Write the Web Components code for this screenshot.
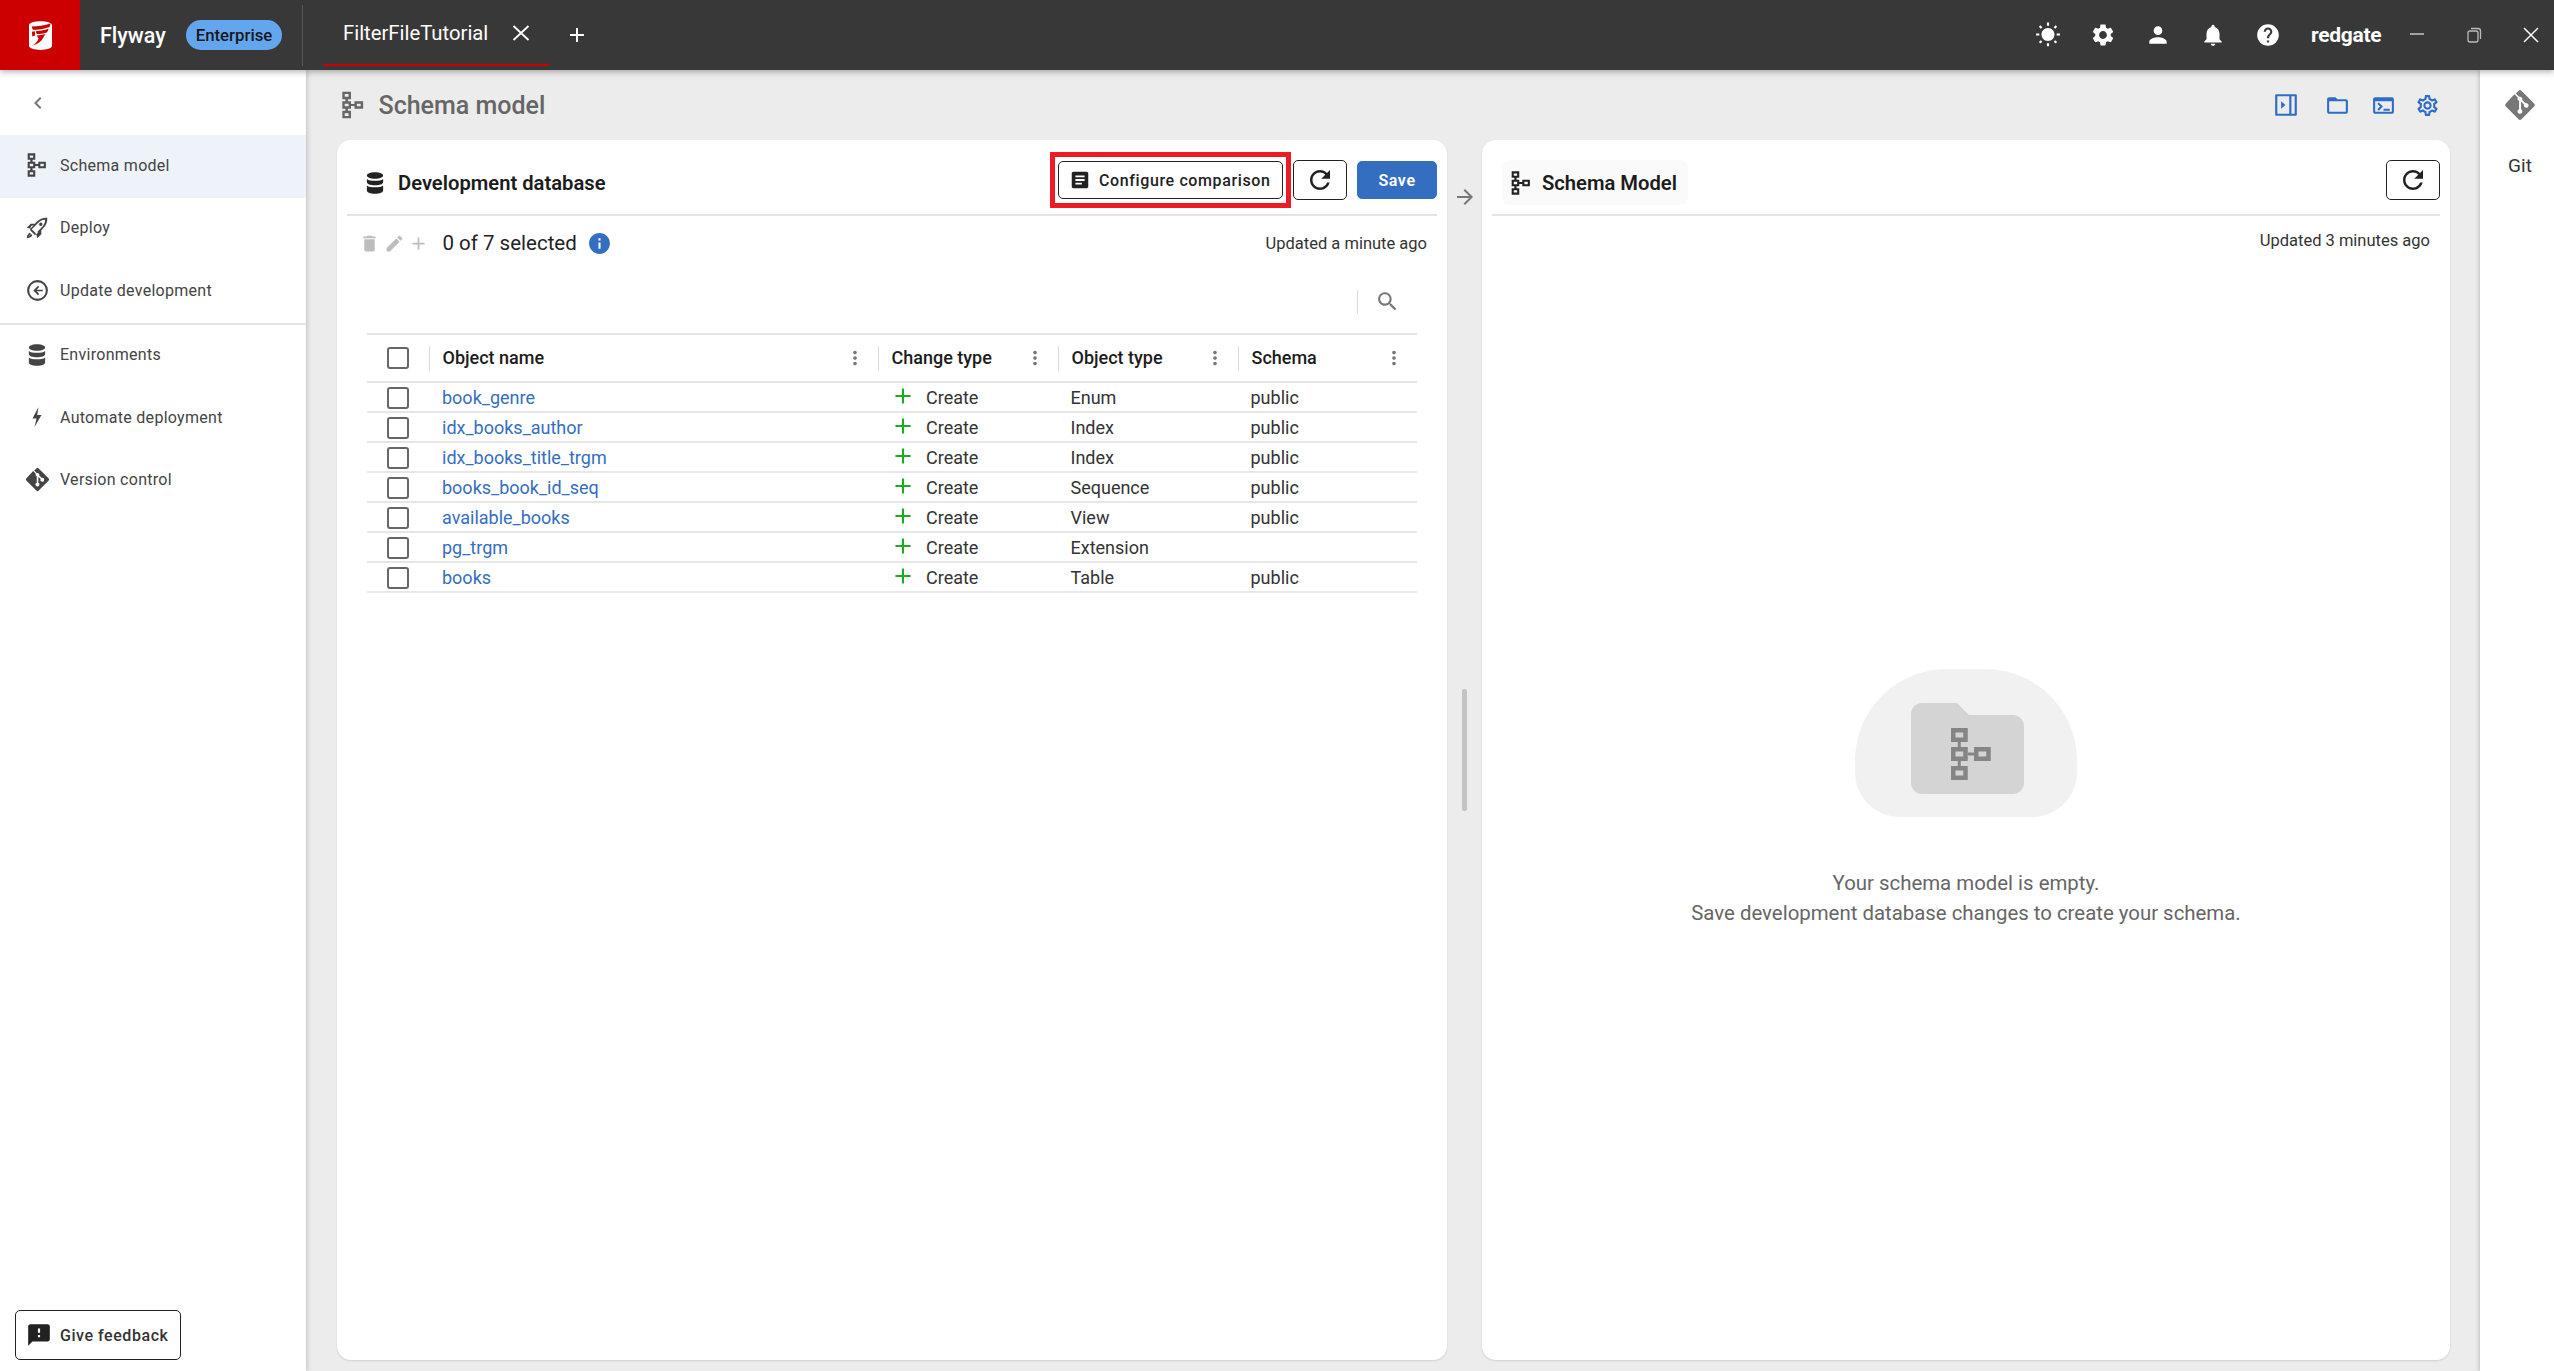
<!DOCTYPE html>
<html>
<head>
<meta charset="utf-8">
<title>Flyway Desktop</title>
<style>
   html, body { margin: 0; height: 100%; }
   body { font-family: Roboto, "Liberation Sans", sans-serif; overflow: hidden; }
</style>
</head>
<body>
<fw-app></fw-app>

<script>
   // Material style paths, 24x24 box
   const ICONS = {
      sun: 'M6.76 4.84l-1.8-1.79-1.41 1.41 1.79 1.79 1.42-1.41zM4 10.5H1v2h3v-2zm9-9.95h-2V3.5h2V.55zm7.45 3.91l-1.41-1.41-1.79 1.79 1.41 1.41 1.79-1.79zm-3.21 13.7l1.79 1.8 1.41-1.41-1.8-1.79-1.4 1.4zM20 10.5v2h3v-2h-3zm-8-5c-3.31 0-6 2.69-6 6s2.69 6 6 6 6-2.69 6-6-2.69-6-6-6zm-1 16.95h2V19.5h-2v2.95zm-7.45-3.91l1.41 1.41 1.79-1.8-1.41-1.41-1.79 1.8z',
      gear: 'M19.14 12.94c.04-.3.06-.61.06-.94 0-.32-.02-.64-.07-.94l2.03-1.58a.49.49 0 0 0 .12-.61l-1.92-3.32a.488.488 0 0 0-.59-.22l-2.39.96c-.5-.38-1.03-.7-1.62-.94l-.36-2.54a.484.484 0 0 0-.48-.41h-3.84c-.24 0-.43.17-.47.41l-.36 2.54c-.59.24-1.13.57-1.62.94l-2.39-.96c-.22-.08-.47 0-.59.22L2.74 8.87c-.12.21-.08.47.12.61l2.03 1.58c-.05.3-.09.63-.09.94s.02.64.07.94l-2.03 1.58a.49.49 0 0 0-.12.61l1.92 3.32c.12.22.37.29.59.22l2.39-.96c.5.38 1.03.7 1.62.94l.36 2.54c.05.24.24.41.48.41h3.84c.24 0 .44-.17.47-.41l.36-2.54c.59-.24 1.13-.56 1.62-.94l2.39.96c.22.08.47 0 .59-.22l1.92-3.32c.12-.22.07-.47-.12-.61l-2.01-1.58zM12 15.6c-1.98 0-3.6-1.62-3.6-3.6s1.62-3.6 3.6-3.6 3.6 1.62 3.6 3.6-1.62 3.6-3.6 3.6z',
      gearline: 'M19.43 12.98c.04-.32.07-.64.07-.98 0-.34-.03-.66-.07-.98l2.11-1.65c.19-.15.24-.42.12-.64l-2-3.46c-.09-.16-.26-.25-.44-.25-.06 0-.12.01-.17.03l-2.49 1c-.52-.4-1.08-.73-1.69-.98l-.38-2.65C14.46 2.18 14.25 2 14 2h-4c-.25 0-.46.18-.49.42l-.38 2.65c-.61.25-1.17.59-1.69.98l-2.49-1c-.06-.02-.12-.03-.18-.03-.17 0-.34.09-.43.25l-2 3.46c-.13.22-.07.49.12.64l2.11 1.65c-.04.32-.07.65-.07.98 0 .33.03.66.07.98l-2.11 1.65c-.19.15-.24.42-.12.64l2 3.46c.09.16.26.25.44.25.06 0 .12-.01.17-.03l2.49-1c.52.4 1.08.73 1.69.98l.38 2.65c.03.24.24.42.49.42h4c.25 0 .46-.18.49-.42l.38-2.65c.61-.25 1.17-.59 1.69-.98l2.49 1c.06.02.12.03.18.03.17 0 .34-.09.43-.25l2-3.46c.12-.22.07-.49-.12-.64l-2.11-1.65zm-1.98-1.71c.04.31.05.52.05.73 0 .21-.02.43-.05.73l-.14 1.13.89.7 1.08.84-.7 1.21-1.27-.51-1.04-.42-.9.68c-.43.32-.84.56-1.25.73l-1.06.43-.16 1.13-.2 1.35h-1.4l-.19-1.35-.16-1.13-1.06-.43c-.43-.18-.83-.41-1.23-.71l-.91-.7-1.06.43-1.27.51-.7-1.21 1.08-.84.89-.7-.14-1.13c-.03-.31-.05-.54-.05-.74s.02-.43.05-.73l.14-1.13-.89-.7-1.08-.84.7-1.21 1.27.51 1.04.42.9-.68c.43-.32.84-.56 1.25-.73l1.06-.43.16-1.13.2-1.35h1.39l.19 1.35.16 1.13 1.06.43c.43.18.83.41 1.23.71l.91.7 1.06-.43 1.27-.51.7 1.21-1.07.85-.89.7.14 1.13zM12 8c-2.21 0-4 1.79-4 4s1.79 4 4 4 4-1.79 4-4-1.79-4-4-4zm0 6c-1.1 0-2-.9-2-2s.9-2 2-2 2 .9 2 2-.9 2-2 2z',
      person: 'M12 12c2.21 0 4-1.79 4-4s-1.79-4-4-4-4 1.79-4 4 1.79 4 4 4zm0 2c-2.67 0-8 1.34-8 4v2h16v-2c0-2.66-5.33-4-8-4z',
      bell: 'M12 22c1.1 0 2-.9 2-2h-4c0 1.1.89 2 2 2zm6-6v-5c0-3.07-1.64-5.64-4.5-6.32V4c0-.83-.67-1.5-1.5-1.5s-1.5.67-1.5 1.5v.68C7.63 5.36 6 7.92 6 11v5l-2 2v1h16v-1l-2-2z',
      help: 'M12 2C6.48 2 2 6.48 2 12s4.48 10 10 10 10-4.48 10-10S17.52 2 12 2zm1 17h-2v-2h2v2zm2.07-7.75l-.9.92C13.45 12.9 13 13.5 13 15h-2v-.5c0-1.1.45-2.1 1.17-2.83l1.24-1.26c.37-.36.59-.86.59-1.41 0-1.1-.9-2-2-2s-2 .9-2 2H8c0-2.21 1.79-4 4-4s4 1.79 4 4c0 .88-.36 1.68-.93 2.25z',
      refresh: 'M17.65 6.35C16.2 4.9 14.21 4 12 4c-4.42 0-7.99 3.58-7.99 8s3.57 8 7.99 8c3.73 0 6.84-2.55 7.73-6h-2.08c-.82 2.33-3.04 4-5.65 4-3.31 0-6-2.69-6-6s2.69-6 6-6c1.66 0 3.14.69 4.22 1.78L13 11h7V4l-2.35 2.35z',
      search: 'M15.5 14h-.79l-.28-.27C15.41 12.59 16 11.11 16 9.5 16 5.91 13.09 3 9.5 3S3 5.91 3 9.5 5.91 16 9.5 16c1.61 0 3.09-.59 4.23-1.57l.27.28v.79l5 4.99L20.49 19l-4.99-5zm-6 0C7.01 14 5 11.99 5 9.5S7.01 5 9.5 5 14 7.01 14 9.5 11.99 14 9.5 14z',
      trash: 'M6 19c0 1.1.9 2 2 2h8c1.1 0 2-.9 2-2V7H6v12zM19 4h-3.5l-1-1h-5l-1 1H5v2h14V4z',
      edit: 'M3 17.25V21h3.75L17.81 9.94l-3.75-3.75L3 17.25zM20.71 7.04a.996.996 0 0 0 0-1.41l-2.34-2.34a.996.996 0 0 0-1.41 0l-1.83 1.83 3.75 3.75 1.83-1.83z',
      add: 'M19 13h-6v6h-2v-6H5v-2h6V5h2v6h6v2z',
      info: 'M12 2C6.48 2 2 6.48 2 12s4.48 10 10 10 10-4.48 10-10S17.52 2 12 2zm1 15h-2v-6h2v6zm0-8h-2V7h2v2z',
      kebab: 'M12 8c1.1 0 2-.9 2-2s-.9-2-2-2-2 .9-2 2 .9 2 2 2zm0 2c-1.1 0-2 .9-2 2s.9 2 2 2 2-.9 2-2-.9-2-2-2zm0 6c-1.1 0-2 .9-2 2s.9 2 2 2 2-.9 2-2-.9-2-2-2z',
      feedback: 'M20 2H4c-1.1 0-1.99.9-1.99 2L2 22l4-4h14c1.1 0 2-.9 2-2V4c0-1.1-.9-2-2-2zm-7 12h-2v-2h2v2zm0-4h-2V6h2v4z',
      article: 'M19 3H5c-1.1 0-2 .9-2 2v14c0 1.1.9 2 2 2h14c1.1 0 2-.9 2-2V5c0-1.1-.9-2-2-2zm-5 14H7v-2h7v2zm3-4H7v-2h10v2zm0-4H7V7h10v2z',
      arrow: 'M12 4l-1.41 1.41L16.17 11H4v2h12.17l-5.58 5.59L12 20l8-8z',
      back: 'M15.41 7.41L14 6l-6 6 6 6 1.41-1.41L10.83 12z',
      folder: 'M20 6h-8l-2-2H4c-1.1 0-1.99.9-1.99 2L2 18c0 1.1.9 2 2 2h16c1.1 0 2-.9 2-2V8c0-1.1-.9-2-2-2zm0 12H4V8h16v10z',
      terminal: 'M20 4H4c-1.11 0-2 .9-2 2v12c0 1.1.89 2 2 2h16c1.1 0 2-.9 2-2V6c0-1.1-.9-2-2-2zm0 14H4V8h16v10zm-2-1h-6v-2h6v2zM7.5 17l-1.41-1.41L8.67 13l-2.59-2.59L7.5 9l4 4-4 4z',
      panel: 'M3 2h18a1 1 0 0 1 1 1v18a1 1 0 0 1-1 1H3a1 1 0 0 1-1-1V3a1 1 0 0 1 1-1zm1 2v16h11V4H4zm13 0v16h3V4h-3zM7.500 8.500l4 3.500-4 3.500v-7z',
      schema: 'M4 2h6.500v5.600H4zM5.800 3.800v2h2.900v-2zM4 9.200h6.500v5.600H4zM5.800 11v2h2.900v-2zM4 16.400h6.500V22H4zM5.800 18.200v2h2.900v-2zM6.300 7.600h1.900v1.600H6.300zM6.300 14.800h1.900v1.600H6.300zM10.500 11.200h2.600v1.600h-2.600zM13.100 9.200h6.500v5.600h-6.500zM14.900 11v2h2.900v-2z',
      dbstack: 'M12 2c4.400 0 7.500 1.300 7.500 3S16.400 8 12 8 4.500 6.700 4.500 5 7.600 2 12 2zM4.500 8.200C6 9.500 8.800 10 12 10s6-.5 7.500-1.800V11c0 1.800-3.100 3.100-7.500 3.100S4.500 12.800 4.500 11V8.200zM4.500 14.200C6 15.500 8.800 16 12 16s6-.5 7.500-1.800V19c0 1.800-3.100 3-7.500 3s-7.500-1.200-7.500-3v-4.800z',
      rocket: 'M21.500 2.500c-3.800-.2-7 .9-9.600 3.500L10 8H6.200L2.500 11.700l3.900 1.100-1 1 4.800 4.800 1-1 1.100 3.900 3.700-3.700V14l1.900-1.900c2.600-2.600 3.800-5.800 3.600-9.600zM7.300 9.800h1.400l-1.900 2-1.200-.3 1.700-1.700zM16.900 10.800l-6 6-3.700-3.700 6-6c1.700-1.700 3.900-2.600 6.300-2.700-.1 2.400-1 4.700-2.600 6.400zM12.700 15.100v1.300l-1.700 1.700-.3-1.100 2-1.900zM15.500 10.100a1.600 1.600 0 1 0 0-3.200 1.600 1.600 0 0 0 0 3.200zM5.400 16.400c-1.300.4-2.300 1.500-2.900 5.100 3.600-.6 4.700-1.600 5.100-2.900l-1.200-1.200c-.3.900-.7 1.500-1.800 1.900.4-1.100 1-1.500 1.900-1.800l-1.100-1.100z',
      update: 'M12 2a10 10 0 1 0 0 20 10 10 0 0 0 0-20zm0 18a8 8 0 1 1 0-16 8 8 0 0 1 0 16zM12.500 7.500l1.100 1.100-2.400 2.600H17v1.600h-5.800l2.400 2.600-1.100 1.100L8 12l4.500-4.500z',
      bolt: 'M13.500 2L7.500 13.500h4L9.500 22l7-12h-4.300l1.300-8z',
      git: 'M22.600 10.900 13.100 1.400a1.500 1.500 0 0 0-2.200 0L8.900 3.400l2.500 2.500a1.800 1.800 0 0 1 2.300 2.300l2.400 2.400a1.800 1.800 0 1 1-1.100 1l-2.200-2.200v5.800a1.800 1.800 0 1 1-1.500-.1V8.800a1.800 1.800 0 0 1-1-2.400L7.800 3.900 1.400 10.900a1.500 1.500 0 0 0 0 2.200l9.500 9.500a1.500 1.500 0 0 0 2.200 0l9.500-9.500a1.500 1.500 0 0 0 0-2.200z'
   }

   class FwIcon extends HTMLElement {
      connectedCallback() {
         const size = this.getAttribute('size') || 24
         const color = this.getAttribute('color') || 'currentColor'
         const shadow = this.attachShadow({ mode: 'open' })
         const name = this.getAttribute('name')
         // the hand drawn schema squares need their holes cut
         const rule = name === 'schema' ? 'evenodd' : 'nonzero'
         shadow.innerHTML = `
            <style>
               :host { display: inline-flex; flex: none; width: ${size}px; height: ${size}px; }
               svg { display: block; width: 100%; height: 100%; }
            </style>
            <svg viewBox="0 0 24 24"><path fill="${color}" fill-rule="${rule}" d="${ICONS[name]}"/></svg>`
      }
   }
   customElements.define('fw-icon', FwIcon)

   class FwTitlebar extends HTMLElement {
      constructor() {
         super()
         this.attachShadow({ mode: 'open' }).innerHTML = `
            <style>
               :host { display: flex; align-items: stretch; height: 70px; background: #383838; color: #fff; position: relative; z-index: 5;
                  box-shadow: 0 2px 6px rgba(0,0,0,.3); }
               .logo { width: 80px; background: #cc0000; display: flex; align-items: center; justify-content: center; }
               .brand { display: flex; align-items: center; width: 222px; padding-left: 20px; box-sizing: border-box; font-size: 21.500px; font-weight: 500; }
               .fly { width: 66px; }
               .pill { margin-left: 20px; width: 96px; height: 30px; border-radius: 15px; background: #64a6ee; color: #14181f; display: flex; align-items: center;
                  justify-content: center; font-size: 16.800px; font-weight: 500; }
               .divider { width: 1px; margin: 5px 0 4px; background: #555; }
               .tab { margin-left: 20px; width: 226px; box-sizing: border-box; height: 66px; border-bottom: 2px solid #cc0000; padding-left: 20px; padding-top: 2px; display: flex; align-items: center; font-size: 20.300px; }
               .tab span { width: 168px; }
               .add { margin-left: 16px; align-self: center; }
               .right { margin-left: auto; display: flex; align-items: center; }
               .tools { display: flex; gap: 29px; margin-right: 30px; }
               .rg { font-size: 21px; font-weight: 700; letter-spacing: -.3px; width: 72px; }
               .win { display: flex; align-items: center; margin-left: 24px; margin-right: 13px; gap: 37px; }
               .win svg { display: block; width: 20px; height: 20px; }
            </style>
            <div class="logo">
               <svg width="23" height="29" viewBox="0 0 24 30">
                  <path fill="#fff" d="M0 4C0 1.500 6 0 12 0s12 1.500 12 4v22c0 2.500-6 4-12 4S0 28.500 0 26z"/>
                  <path fill="#cc0000" d="M2.700 5.500C9 5.500 16 4.500 22.600 2.500L21.500 6C16 8 9 9 4 9zM3 11l3-.5.500 4.500-3 1zM7 10.500C11 10.500 16 9.500 20.500 8L19 11.500C15 13 11 13.500 8 13.500zM8 15C11 15 14 14.500 17 13.500L15 17C13 21 9 24 3.500 25.500 7 23 9.500 20.500 10 18z"/>
               </svg>
            </div>
            <div class="brand"><span class="fly">Flyway</span><span class="pill">Enterprise</span></div>
            <div class="divider"></div>
            <div class="tab"><span>FilterFileTutorial</span>
               <svg width="20" height="20" viewBox="0 0 20 20"><path d="M2.500 3l15 14M17.500 3l-15 14" stroke="#fff" stroke-width="1.800"/></svg>
            </div>
            <fw-icon class="add" name="add" size="24"></fw-icon>
            <div class="right">
               <div class="tools">
                  <fw-icon name="sun" size="26"></fw-icon>
                  <fw-icon name="gear" size="26"></fw-icon>
                  <fw-icon name="person" size="26"></fw-icon>
                  <fw-icon name="bell" size="26"></fw-icon>
                  <fw-icon name="help" size="26"></fw-icon>
               </div>
               <span class="rg">redgate</span>
               <div class="win">
                  <svg viewBox="0 0 20 20"><path d="M3 9h14" stroke="#ddd" stroke-width="1.300"/></svg>
                  <svg viewBox="0 0 20 20" fill="none" stroke="#bbb" stroke-width="1.300"><rect x="4" y="6" width="10" height="11" rx="2"/><path d="M7 3.500h7a2.500 2.500 0 0 1 2.500 2.500v8"/></svg>
                  <svg viewBox="0 0 20 20"><path d="M3 3l14 14M17 3L3 17" stroke="#fff" stroke-width="1.500"/></svg>
               </div>
            </div>`
      }
   }
   customElements.define('fw-titlebar', FwTitlebar)

   class FwNavItem extends HTMLElement {
      constructor() {
         super()
         this.attachShadow({ mode: 'open' }).innerHTML = `
            <style>
               :host { display: flex; align-items: center; box-sizing: border-box; height: 62.500px; padding: 0 0 2px 22px; font-size: 16px; letter-spacing: .28px; color: #444; }
               :host([active]) { background: #eef3fa; }
               .ic { width: 30px; margin-right: 8px; display: flex; justify-content: center; }
            </style>
            <span class="ic"><slot name="icon"></slot></span><slot></slot>`
      }
   }
   customElements.define('fw-nav-item', FwNavItem)

   class FwSidebar extends HTMLElement {
      constructor() {
         super()
         this.attachShadow({ mode: 'open' }).innerHTML = `
            <style>
               :host { display: flex; flex-direction: column; flex: none; width: 306px; background: #fff; position: relative; z-index: 3;
                  box-shadow: 1px 0 5px rgba(0,0,0,.2); color: #777; }
               .back { height: 65px; padding-left: 26px; display: flex; align-items: center; }
               hr { border: 0; border-top: 2px solid #e4e4e4; margin: 0; }
               .foot { margin-top: auto; padding: 0 0 11px 15px; }
               .fb { box-sizing: border-box; width: 166px; height: 50px; border: 1.500px solid #222; border-radius: 5px; display: flex; align-items: center; padding-left: 10px; gap: 8px;
                  font-size: 16px; font-weight: 500; letter-spacing: .55px; color: #333; }
            </style>
            <div class="back"><fw-icon name="back" size="24"></fw-icon></div>
            <fw-nav-item active><fw-icon slot="icon" name="schema" size="28"></fw-icon>Schema model</fw-nav-item>
            <fw-nav-item><fw-icon slot="icon" name="rocket" size="26"></fw-icon>Deploy</fw-nav-item>
            <fw-nav-item><fw-icon slot="icon" name="update" size="25"></fw-icon>Update development</fw-nav-item>
            <hr>
            <fw-nav-item><fw-icon slot="icon" name="dbstack" size="26"></fw-icon>Environments</fw-nav-item>
            <fw-nav-item><fw-icon slot="icon" name="bolt" size="24"></fw-icon>Automate deployment</fw-nav-item>
            <fw-nav-item><fw-icon slot="icon" name="git" size="25"></fw-icon>Version control</fw-nav-item>
            <div class="foot"><div class="fb"><fw-icon name="feedback" size="26" color="#222"></fw-icon>Give feedback</div></div>`
      }
   }
   customElements.define('fw-sidebar', FwSidebar)

   class FwCard extends HTMLElement {
      constructor() {
         super()
         this.attachShadow({ mode: 'open' }).innerHTML = `
            <style>
               :host { display: flex; flex-direction: column; background: #fff; border-radius: 14px; min-width: 0; box-shadow: 0 1px 2px rgba(0,0,0,.12); }
               header { box-sizing: border-box; height: 76px; flex: none; margin: 0 10px; border-bottom: 2px solid #e4e4e4; display: flex; align-items: center; }
               .body { flex: 1; display: flex; flex-direction: column; min-height: 0; }
            </style>
            <header><slot name="head"></slot></header>
            <div class="body"><slot></slot></div>`
      }
   }
   customElements.define('fw-card', FwCard)

   class FwButton extends HTMLElement {
      constructor() {
         super()
         this.attachShadow({ mode: 'open' }).innerHTML = `
            <style>
               :host { display: inline-flex; align-items: center; justify-content: center; box-sizing: border-box; height: 38px; border: 1.500px solid #222; border-radius: 5px;
                  background: #fff; color: #222; font-size: 16px; font-weight: 500; letter-spacing: .62px; gap: 8px; }
               :host([icon]) { width: 54px; height: 40px; }
               :host([primary]) { background: #346ec1; border-color: #346ec1; color: #fff; width: 80px; font-weight: 600; }
            </style>
            <slot></slot>`
      }
   }
   customElements.define('fw-button', FwButton)

   class FwColumn extends HTMLElement {
      constructor() {
         super()
         this.attachShadow({ mode: 'open' }).innerHTML = `
            <style>
               :host { display: flex; align-items: center; height: 100%; font-size: 18px; font-weight: 500; color: #1c1c1c; padding-left: 13px; box-sizing: border-box; }
               .sep { width: 1px; height: 25px; background: #ddd; flex: none; margin-left: -13px; margin-right: 12.500px; }
               .name { flex: 1; padding-bottom: 2px; }
               fw-icon { margin-right: 12px; color: #777; }
            </style>
            <span class="sep"></span><span class="name"><slot></slot></span><fw-icon name="kebab" size="22"></fw-icon>`
      }
   }
   customElements.define('fw-column', FwColumn)

   class FwCheck extends HTMLElement {
      constructor() {
         super()
         this.attachShadow({ mode: 'open' }).innerHTML = `
            <style>
               :host { display: block; box-sizing: border-box; width: 22px; height: 22px; border: 2.500px solid #666; border-radius: 3px; background: #fff; }
            </style>`
      }
   }
   customElements.define('fw-check', FwCheck)

   class FwObjectRow extends HTMLElement {
      connectedCallback() {
         const shadow = this.attachShadow({ mode: 'open' })
         shadow.innerHTML = `
            <style>
               :host { display: grid; grid-template-columns: 62px 449px 180px 180px 1fr; align-items: center; height: 30px; box-sizing: border-box; border-bottom: 2px solid #e6e6e6;
                  font-size: 18px; color: #333; }
               .chk { padding-left: 20px; padding-top: 1px; }
               a { color: #346ec1; padding-left: 13px; }
               .chg { display: flex; align-items: center; padding-left: 13px; height: 28px; }
               .chg fw-icon { margin: 0 10px 3px -1px; }
               .t { padding-left: 12.500px; }
            </style>
            <div class="chk"><fw-check></fw-check></div>
            <a>${this.getAttribute('name')}</a>
            <div class="chg"><fw-icon name="add" size="26" color="#1fa824"></fw-icon>Create</div>
            <div class="t">${this.getAttribute('type')}</div>
            <div class="t">${this.getAttribute('schema') || ''}</div>`
      }
   }
   customElements.define('fw-object-row', FwObjectRow)

   class FwObjectTable extends HTMLElement {
      constructor() {
         super()
         this.attachShadow({ mode: 'open' }).innerHTML = `
            <style>
               :host { display: block; margin: 0 30px; }
               .head { display: grid; grid-template-columns: 62px 449px 180px 180px 1fr; height: 50px; box-sizing: border-box; align-items: center;
                  border-top: 2px solid #e4e4e4; border-bottom: 2px solid #e4e4e4; }
               .chk { padding-left: 20px; }
            </style>
            <div class="head">
               <div class="chk"><fw-check></fw-check></div>
               <fw-column>Object name</fw-column>
               <fw-column>Change type</fw-column>
               <fw-column>Object type</fw-column>
               <fw-column>Schema</fw-column>
            </div>
            <slot></slot>`
      }
   }
   customElements.define('fw-object-table', FwObjectTable)

   class FwApp extends HTMLElement {
      constructor() {
         super()
         this.attachShadow({ mode: 'open' }).innerHTML = `
            <style>
               :host { display: flex; flex-direction: column; height: 1371px; background: #ececec; overflow: hidden; }
               .under { flex: 1; display: flex; min-height: 0; }
               main { flex: 1; display: flex; flex-direction: column; min-width: 0; padding: 0 30px 11px 31px; }
               .page { height: 70px; flex: none; display: flex; align-items: center; color: #666; font-size: 25px; font-weight: 500; }
               .page > fw-icon { margin-right: 9.500px; }
               .page .tools { margin-left: auto; display: flex; align-items: center; color: #2e6dc4; margin-right: 10.500px; }
               .tools .t1 { margin-left: 25.500px; }
               .tools .t2 { margin-left: 21px; }
               .tools .t3 { margin-left: 19px; }
               .cards { flex: 1; display: flex; min-height: 0; }
               fw-card.left { width: 1110px; flex: none; }
               fw-card.rightc { flex: 1; }
               .gutter { width: 35px; flex: none; display: flex; flex-direction: column; align-items: center; position: relative; color: #777; }
               .gutter fw-icon { margin-top: 45px; }
               .grip { position: absolute; top: 549px; left: 15px; width: 5px; height: 122px; background: #c4c4c4; border-radius: 2px; }
               .title { display: flex; align-items: center; font-size: 20.200px; font-weight: 600; color: #1c1c1c; }
               .title fw-icon { color: #222; }
               .ltitle { padding: 12px 0 0 14.500px; gap: 10.500px; flex: 1; }
               .actions { display: flex; align-items: center; margin: 0 0 6px auto; gap: 10px; }
               .configure { width: 225px; padding-left: 10px; justify-content: flex-start; }
               .mark { border: 5px solid #ed1c24; padding: 4px 3px; margin-right: -8px; }
               .status { display: flex; align-items: center; flex: none; height: 54px; padding: 0 20px 0 22px; font-size: 16.500px; color: #333; }
               .tb { color: #bdbdbd; display: flex; gap: 3.500px; align-items: center; }
               .count { margin-left: 13.500px; font-size: 20.500px; color: #222; }
               .info { margin-left: 10px; }
               .status .upd { margin-left: auto; }
               .search { height: 63px; flex: none; display: flex; align-items: center; justify-content: flex-end; padding-right: 47.500px; color: #777; }
               .search i { display: block; width: 1px; height: 24px; background: #ddd; margin-right: 17px; }
               .rtitle { background: #fafafa; border-radius: 8px; box-sizing: border-box; width: 186px; height: 45px; padding-left: 5px; margin: 11px 0 0 10px; gap: 7px; }
               .rhead { display: flex; align-items: center; flex: 1; }
               .rhead fw-button { margin: 6px 0 0 auto; }
               .updr { padding: 0 20px; height: 30px; margin-top: 9px; flex: none; display: flex; align-items: center; justify-content: flex-end; font-size: 16.500px; color: #333; }
               .empty { flex: 1; display: flex; flex-direction: column; align-items: center; padding-top: 414px; color: #666; font-size: 20.400px; line-height: 30px; text-align: center; }
               .blob { display: block; margin-bottom: 51px; }
               .rail { flex: none; width: 74px; box-sizing: border-box; padding-left: 6px; background: #fff; position: relative; z-index: 2; box-shadow: -1px 0 4px rgba(0,0,0,.2); display: flex; flex-direction: column; align-items: center;
                  color: #333; font-size: 19px; }
               .rail fw-icon { margin-top: 19px; margin-bottom: 33px; color: #777; }
            </style>
            <fw-titlebar></fw-titlebar>
            <div class="under">
               <fw-sidebar></fw-sidebar>
               <main>
                  <div class="page">
                     <fw-icon name="schema" size="32"></fw-icon>Schema model
                     <div class="tools">
                        <fw-icon name="panel" size="26"></fw-icon>
                        <fw-icon class="t1" name="folder" size="25"></fw-icon>
                        <fw-icon class="t2" name="terminal" size="25"></fw-icon>
                        <fw-icon class="t3" name="gearline" size="25"></fw-icon>
                     </div>
                  </div>
                  <div class="cards">
                     <fw-card class="left">
                        <div slot="head" class="title ltitle">
                           <fw-icon name="dbstack" size="26"></fw-icon>Development database
                           <div class="actions">
                              <div class="mark"><fw-button class="configure"><fw-icon name="article" size="22"></fw-icon>Configure comparison</fw-button></div>
                              <fw-button icon><fw-icon name="refresh" size="30"></fw-icon></fw-button>
                              <fw-button primary>Save</fw-button>
                           </div>
                        </div>
                        <div class="status">
                           <div class="tb">
                              <fw-icon name="trash" size="21"></fw-icon>
                              <fw-icon name="edit" size="21"></fw-icon>
                              <fw-icon name="add" size="21"></fw-icon>
                           </div>
                           <span class="count">0 of 7 selected</span>
                           <fw-icon class="info" name="info" size="25" color="#346ec1"></fw-icon>
                           <span class="upd">Updated a minute ago</span>
                        </div>
                        <div class="search"><i></i><fw-icon name="search" size="25"></fw-icon></div>
                        <fw-object-table>
                           <fw-object-row name="book_genre" type="Enum" schema="public"></fw-object-row>
                           <fw-object-row name="idx_books_author" type="Index" schema="public"></fw-object-row>
                           <fw-object-row name="idx_books_title_trgm" type="Index" schema="public"></fw-object-row>
                           <fw-object-row name="books_book_id_seq" type="Sequence" schema="public"></fw-object-row>
                           <fw-object-row name="available_books" type="View" schema="public"></fw-object-row>
                           <fw-object-row name="pg_trgm" type="Extension"></fw-object-row>
                           <fw-object-row name="books" type="Table" schema="public"></fw-object-row>
                        </fw-object-table>
                     </fw-card>
                     <div class="gutter"><fw-icon name="arrow" size="24"></fw-icon><span class="grip"></span></div>
                     <fw-card class="rightc">
                        <div slot="head" class="rhead">
                           <div class="title rtitle"><fw-icon name="schema" size="28"></fw-icon>Schema Model</div>
                           <fw-button icon><fw-icon name="refresh" size="30"></fw-icon></fw-button>
                        </div>
                        <div class="updr">Updated 3 minutes ago</div>
                        <div class="empty">
                           <svg class="blob" width="222" height="148" viewBox="0 0 222 148">
                              <path fill="#f1f1f1" d="M92 0h38c51 0 92 41 92 92v11c0 25-20 45-45 45H45C20 148 0 128 0 103V92C0 41 41 0 92 0z"/>
                              <path fill="#d4d4d4" d="M56 45c0-6 5-11 11-11h35l12 12h44c6 0 11 5 11 11v57c0 6-5 11-11 11H67c-6 0-11-5-11-11z"/>
                              <g fill="none" stroke="#858585" stroke-width="4.500">
                                 <rect x="98.250" y="61.250" width="12.250" height="9.500"/>
                                 <rect x="98.250" y="80.250" width="12.250" height="9.500"/>
                                 <rect x="98.250" y="99.250" width="12.250" height="9.500"/>
                                 <rect x="121.250" y="80.250" width="12.250" height="9.500"/>
                                 <path d="M104.300 73v5M104.300 92v5M112.700 85h6.500" stroke-width="3"/>
                              </g>
                           </svg>
                           <div>Your schema model is empty.</div>
                           <div>Save development database changes to create your schema.</div>
                        </div>
                     </fw-card>
                  </div>
               </main>
               <div class="rail"><fw-icon name="git" size="32"></fw-icon>Git</div>
            </div>`
      }
   }
   customElements.define('fw-app', FwApp)
</script>
</body>
</html>
